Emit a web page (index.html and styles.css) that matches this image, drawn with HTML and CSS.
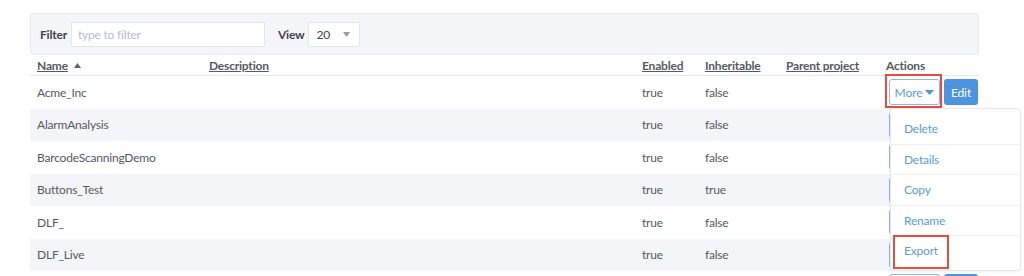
FILE: index.html
```html
<!DOCTYPE html>
<html>
<head>
<meta charset="utf-8">
<link rel="stylesheet" href="styles.css">
</head>
<body>
<div class="page">
  <div class="toolbar">
    <label class="lbl">Filter</label>
    <input class="filter" type="text" placeholder="type to filter">
    <label class="lbl view-lbl">View</label>
    <div class="select"><span>20</span><svg class="tri-gray" width="7" height="5" viewBox="0 0 7 5"><path d="M0 0H7L3.5 5Z"/></svg></div>
  </div>
  <div class="table">
    <div class="row head">
      <div class="cell"><span class="sort">Name</span><svg class="tri-up" width="7" height="5" viewBox="0 0 7 5"><path d="M0 5H7L3.5 0Z"/></svg></div>
      <div class="cell"><span class="sort">Description</span></div>
      <div class="cell"><span class="sort">Enabled</span></div>
      <div class="cell"><span class="sort">Inheritable</span></div>
      <div class="cell"><span class="sort">Parent project</span></div>
      <div class="cell">Actions</div>
    </div>
    <div class="row">
      <div class="cell">Acme_Inc</div><div class="cell"></div><div class="cell">true</div><div class="cell">false</div><div class="cell"></div>
      <div class="cell actions">
        <div class="btns">
          <button class="more">More<svg class="tri" width="9" height="5" viewBox="0 0 9 5"><path d="M0 0H9L4.5 5Z"/></svg></button><button class="edit">Edit</button>
          <div class="hl hl-more"></div>
          <div class="menu">
            <div class="item">Delete</div>
            <div class="item">Details</div>
            <div class="item">Copy</div>
            <div class="item">Rename</div>
            <div class="item">Export<div class="hl hl-export"></div></div>
          </div>
        </div>
      </div>
    </div>
    <div class="row alt">
      <div class="cell">AlarmAnalysis</div><div class="cell"></div><div class="cell">true</div><div class="cell">false</div><div class="cell"></div>
      <div class="cell actions"><div class="btns"><button class="more covered"></button><button class="edit covered"></button></div></div>
    </div>
    <div class="row">
      <div class="cell">BarcodeScanningDemo</div><div class="cell"></div><div class="cell">true</div><div class="cell">false</div><div class="cell"></div>
      <div class="cell actions"><div class="btns"><button class="more covered"></button><button class="edit covered"></button></div></div>
    </div>
    <div class="row alt">
      <div class="cell">Buttons_Test</div><div class="cell"></div><div class="cell">true</div><div class="cell">true</div><div class="cell"></div>
      <div class="cell actions"><div class="btns"><button class="more covered"></button><button class="edit covered"></button></div></div>
    </div>
    <div class="row">
      <div class="cell">DLF_</div><div class="cell"></div><div class="cell">true</div><div class="cell">false</div><div class="cell"></div>
      <div class="cell actions"><div class="btns"><button class="more covered"></button><button class="edit covered"></button></div></div>
    </div>
    <div class="row alt">
      <div class="cell">DLF_Live</div><div class="cell"></div><div class="cell">true</div><div class="cell">false</div><div class="cell"></div>
      <div class="cell actions"><div class="btns"><button class="more covered"></button><button class="edit covered"></button></div></div>
    </div>
    <div class="row">
      <div class="cell"></div><div class="cell"></div><div class="cell"></div><div class="cell"></div><div class="cell"></div>
      <div class="cell actions"><div class="btns"><button class="more covered"></button><button class="edit covered"></button></div></div>
    </div>
  </div>
</div>
</body>
</html>
```
FILE: styles.css
```css
html, body {
  margin: 0;
  padding: 0;
  background: #ffffff;
  overflow: hidden;
}
body {
  font-family: "Lato", "Open Sans", sans-serif;
  font-size: 12px;
  letter-spacing: -0.2px;
  color: #555a60;
}
.page {
  padding: 13px 0 0 30px;
  width: 949px;
}
.toolbar {
  display: flex;
  align-items: center;
  background: #f4f5f8;
  border: 1px solid #e9ebf0;
  border-radius: 3px;
  padding-left: 9px;
  box-sizing: border-box;
  height: 42px;
}
.lbl {
  font-weight: 700;
  color: #3f444a;
  margin-right: 4px;
}
.view-lbl {
  margin-left: 13px;
  margin-right: 4px;
}
.filter {
  width: 194px;
  height: 25px;
  box-sizing: border-box;
  border: 1px solid #e4e6ea;
  border-radius: 2px;
  background: #fff;
  font-family: inherit;
  font-size: 12px;
  letter-spacing: -0.2px;
  padding: 0 6px;
  outline: none;
}
.filter::placeholder {
  color: #b8bcc2;
}
.select {
  width: 52px;
  height: 25px;
  box-sizing: border-box;
  border: 1px solid #e4e6ea;
  border-radius: 2px;
  background: #fff;
  display: flex;
  align-items: center;
  justify-content: space-between;
  padding: 0 9px 0 7px;
  color: #444;
}
.tri-gray {
  fill: #9a9ea4;
}
.table {
  width: 949px;
}
.row {
  display: grid;
  grid-template-columns: 172px 433px 63px 81px 100px 100px;
  height: 32.5px;
  align-items: center;
}
.row.alt {
  background: #f4f5f8;
}
.row.head {
  height: 20px;
  border-bottom: 1px solid #e4e7ec;
  font-weight: 700;
  color: #555a60;
}
.cell {
  padding-left: 7px;
  white-space: nowrap;
}
.sort {
  text-decoration: underline;
}
.tri-up {
  fill: #60656b;
  margin-left: 6px;
  vertical-align: 2px;
}
.actions {
  padding-left: 10px;
}
.btns {
  position: relative;
  display: flex;
  gap: 4px;
  height: 26px;
}
.more {
  width: 51px;
  height: 26px;
  background: #fff;
  border: 1px solid #8ab8ec;
  border-radius: 3px;
  color: #5a9be3;
  font-family: inherit;
  font-size: 12px;
  letter-spacing: -0.1px;
  padding: 0;
  display: flex;
  align-items: center;
  justify-content: center;
  gap: 3px;
}
.tri {
  fill: #4c94e0;
}
.edit {
  width: 34px;
  height: 26px;
  background: #4c94e0;
  border: none;
  border-radius: 3px;
  color: #fff;
  font-family: inherit;
  font-size: 12px;
  letter-spacing: -0.1px;
  padding: 0;
}
.hl {
  position: absolute;
  border: 2px solid #e74c3c;
  box-sizing: border-box;
  pointer-events: none;
}
.hl-more {
  left: -4px;
  top: -5px;
  width: 57px;
  height: 34px;
}
.menu {
  position: absolute;
  left: 1px;
  top: 29px;
  width: 129px;
  background: #fff;
  border: 1px solid #e6e8ec;
  border-radius: 3px;
  box-shadow: 0 1px 3px rgba(0,0,0,0.06);
  padding: 5px 0 3px;
  z-index: 10;
}
.item {
  position: relative;
  height: 30.5px;
  line-height: 30.5px;
  padding-left: 13px;
  color: #5a9be3;
  border-bottom: 1px solid #eceef2;
  box-sizing: border-box;
}
.item:last-child {
  border-bottom: none;
}
.hl-export {
  left: 2px;
  top: -1px;
  width: 56px;
  height: 34px;
}
```
